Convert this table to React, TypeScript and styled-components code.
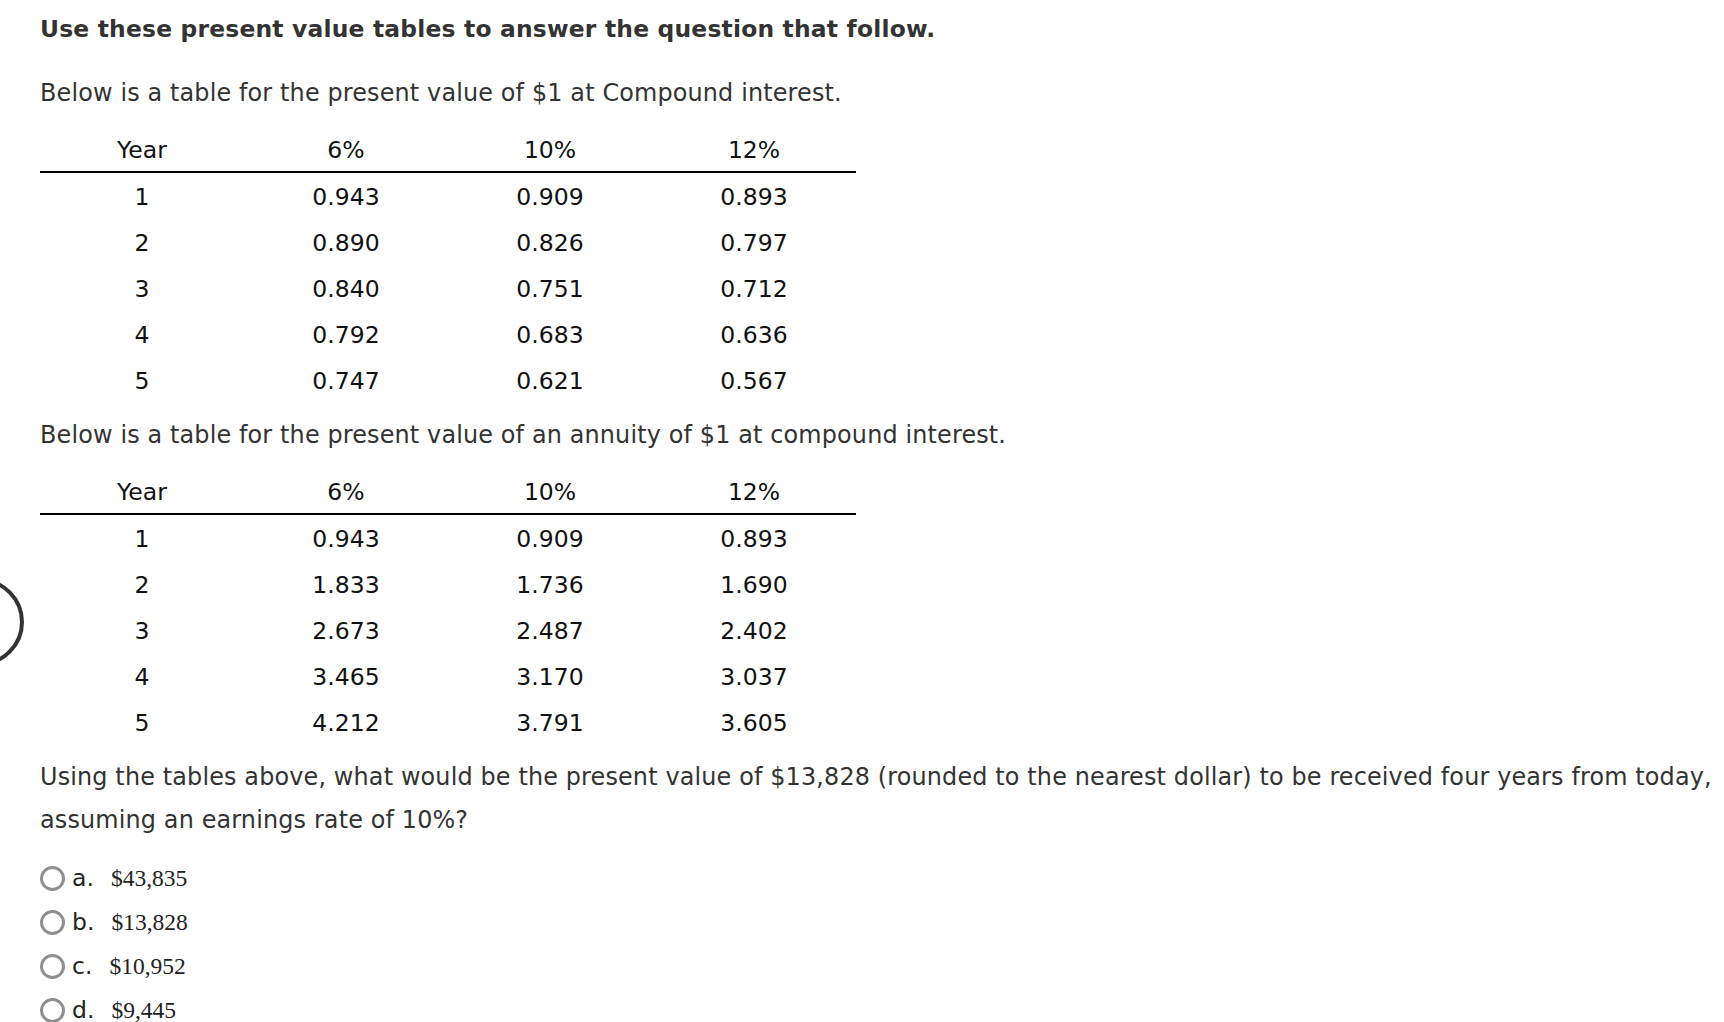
import styled, { createGlobalStyle } from "styled-components";

const GlobalStyle = createGlobalStyle`
  body {
    margin: 0;
    background: #fff;
    font-family: "DejaVu Sans", Verdana, sans-serif;
    color: #333;
  }
`;

const Page = styled.div`
  position: relative;
  padding: 12px 0 0 40px;
  height: 1022px;
  box-sizing: border-box;
  overflow: hidden;
`;

const Heading = styled.div`
  font-size: 23.4px;
  font-weight: bold;
  line-height: 34px;
  letter-spacing: 0.2px;
`;

const Text = styled.p<{ $top: number }>`
  margin: ${(p) => p.$top}px 0 0;
  font-size: 23.9px;
  line-height: 43px;
  letter-spacing: 0.15px;
  white-space: nowrap;
`;

const Table = styled.table<{ $top: number }>`
  margin-top: ${(p) => p.$top}px;
  border-collapse: collapse;
  font-size: 23.5px;
  color: #111;
`;

const Th = styled.th`
  width: 204px;
  height: 42px;
  padding: 0;
  font-weight: normal;
  text-align: center;
  vertical-align: middle;
  border-bottom: 2px solid #000;
`;

const Td = styled.td`
  height: 44px;
  padding: 2px 0 0;
  text-align: center;
  vertical-align: middle;
`;

const Options = styled.div`
  margin-top: 14px;
  display: flex;
  flex-direction: column;
`;

const Option = styled.label`
  display: flex;
  align-items: center;
  height: 44px;
`;

const Radio = styled.span`
  width: 19px;
  height: 19px;
  border: 3.5px solid #8e8e93;
  border-radius: 50%;
`;

const Letter = styled.span`
  font-size: 23.5px;
  margin-left: 7px;
  margin-right: 17px;
  color: #222;
`;

const Value = styled.span`
  font-family: "Liberation Serif", "Times New Roman", serif;
  font-size: 23.5px;
  color: #222;
`;

const SideRing = styled.div`
  position: absolute;
  left: -64px;
  top: 578px;
  width: 80px;
  height: 80px;
  border: 4px solid #333;
  border-radius: 50%;
`;

const pv = [
  ["1", "0.943", "0.909", "0.893"],
  ["2", "0.890", "0.826", "0.797"],
  ["3", "0.840", "0.751", "0.712"],
  ["4", "0.792", "0.683", "0.636"],
  ["5", "0.747", "0.621", "0.567"],
];

const annuity = [
  ["1", "0.943", "0.909", "0.893"],
  ["2", "1.833", "1.736", "1.690"],
  ["3", "2.673", "2.487", "2.402"],
  ["4", "3.465", "3.170", "3.037"],
  ["5", "4.212", "3.791", "3.605"],
];

const RateTable = ({ rows, top }: { rows: string[][]; top: number }) => (
  <Table $top={top}>
    <thead>
      <tr>
        <Th>Year</Th>
        <Th>6%</Th>
        <Th>10%</Th>
        <Th>12%</Th>
      </tr>
    </thead>
    <tbody>
      {rows.map((r) => (
        <tr key={r[0]}>
          {r.map((c, i) => (
            <Td key={i}>{c}</Td>
          ))}
        </tr>
      ))}
    </tbody>
  </Table>
);

const answers = [
  ["a.", "$43,835"],
  ["b.", "$13,828"],
  ["c.", "$10,952"],
  ["d.", "$9,445"],
];

export default function App() {
  return (
    <>
      <GlobalStyle />
      <Page>
        <SideRing />
        <Heading>Use these present value tables to answer the question that follow.</Heading>
        <Text $top={26}>Below is a table for the present value of $1 at Compound interest.</Text>
        <RateTable rows={pv} top={14} />
        <Text $top={11}>Below is a table for the present value of an annuity of $1 at compound interest.</Text>
        <RateTable rows={annuity} top={14} />
        <Text $top={11}>
          Using the tables above, what would be the present value of $13,828 (rounded to the nearest dollar) to be
          received four years from today,
          <br />
          assuming an earnings rate of 10%?
        </Text>
        <Options>
          {answers.map(([l, v]) => (
            <Option key={l}>
              <Radio />
              <Letter>{l}</Letter>
              <Value>{v}</Value>
            </Option>
          ))}
        </Options>
      </Page>
    </>
  );
}
